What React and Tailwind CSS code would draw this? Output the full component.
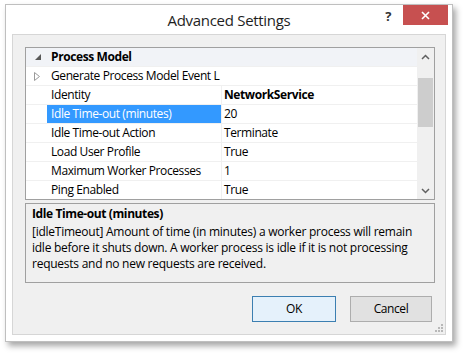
const rows = [
  { label: "Identity", value: "NetworkService", bold: true },
  { label: "Idle Time-out (minutes)", value: "20", selected: true },
  { label: "Idle Time-out Action", value: "Terminate" },
  { label: "Load User Profile", value: "True" },
  { label: "Maximum Worker Processes", value: "1" },
  { label: "Ping Enabled", value: "True" },
];

function Row({ label, value, bold, selected }) {
  return (
    <div className="flex h-[19px] border-b border-[#f0f0f0]">
      <div className="w-[21px] shrink-0 bg-white" />
      <div
        className={
          selected
            ? "w-[174px] shrink-0 bg-[#3399ff] text-white pl-[4px] leading-[18px]"
            : "w-[174px] shrink-0 pl-[4px] leading-[18px]"
        }
      >
        {label}
      </div>
      <div
        className={
          bold
            ? "flex-1 border-l border-[#f0f0f0] pl-[2px] leading-[18px] font-bold"
            : "flex-1 border-l border-[#f0f0f0] pl-[2px] leading-[18px]"
        }
      >
        {value}
      </div>
    </div>
  );
}

export default function App() {
  return (
    <div
      className="w-[466px] h-[354px] bg-white overflow-hidden pt-[4px] pl-[5px] text-[12px] tracking-[-0.4px] text-black"
      style={{ fontFamily: "'Open Sans', 'Noto Sans', sans-serif" }}
    >
      <div className="w-[448px] h-[338px] border border-[#bfbfbf] bg-white shadow-[3px_4px_6px_rgba(0,0,0,0.35)] flex flex-col">
        {/* title bar */}
        <div className="relative h-[29px] shrink-0 flex items-center justify-center">
          <span className="text-[15px] tracking-[-0.3px] text-[#1e1e1e] mt-[1px]">Advanced Settings</span>
          <div className="absolute right-[4px] top-0 flex items-start">
            <span className="text-[13px] font-bold text-[#333] mr-[12px] mt-[2px]">?</span>
            <div className="w-[45px] h-[20px] bg-[#c75050] flex items-center justify-center">
              <svg width="9" height="9" viewBox="0 0 9 9">
                <path d="M1 1 L8 8 M8 1 L1 8" stroke="white" strokeWidth="1.6" />
              </svg>
            </div>
          </div>
        </div>

        {/* client area */}
        <div className="relative mx-[6px] h-[301px] border border-[#d6d6d6] bg-[#f0f0f0] p-[12px] flex flex-col">
          {/* property grid */}
          <div className="w-[410px] h-[153px] border border-[#a0a0a0] bg-white flex overflow-hidden">
            <div className="flex-1 overflow-hidden">
              <div className="flex items-center h-[19px] bg-[#f1f3f7] border-b border-[#f0f0f0]">
                <div className="w-[21px] flex justify-center">
                  <svg width="6" height="6" viewBox="0 0 6 6" className="ml-[2px]">
                    <polygon points="6,0 6,6 0,6" fill="#595959" />
                  </svg>
                </div>
                <span className="pl-[4px] font-bold">Process Model</span>
              </div>
              <div className="flex h-[19px] border-b border-[#f0f0f0]">
                <div className="w-[21px] shrink-0 flex items-center justify-center">
                  <svg width="6" height="9" viewBox="0 0 6 9" className="ml-[1px]">
                    <polygon points="0.5,0.5 5.5,4.5 0.5,8.5" fill="none" stroke="#9a9a9a" />
                  </svg>
                </div>
                <div className="pl-[4px] leading-[18px] whitespace-nowrap">
                  Generate Process Model Event L
                </div>
              </div>
              {rows.map((r) => (
                <Row key={r.label} {...r} />
              ))}
            </div>
            {/* scrollbar */}
            <div className="w-[17px] shrink-0 bg-[#f0f0f0] flex flex-col items-center">
              <div className="h-[17px] flex items-center justify-center">
                <svg width="9" height="6" viewBox="0 0 9 6">
                  <path d="M1 5 L4.5 1.5 L8 5" fill="none" stroke="#606060" strokeWidth="1.5" />
                </svg>
              </div>
              <div className="mt-[13px] w-[15px] h-[49px] bg-[#cdcdcd]" />
              <div className="flex-1" />
              <div className="h-[17px] flex items-center justify-center">
                <svg width="9" height="6" viewBox="0 0 9 6">
                  <path d="M1 1 L4.5 4.5 L8 1" fill="none" stroke="#606060" strokeWidth="1.5" />
                </svg>
              </div>
            </div>
          </div>

          {/* description */}
          <div className="mt-[3px] w-[410px] h-[80px] border border-[#a0a0a0] bg-[#f0f0f0] px-[6px] pt-[2px] leading-[16px] tracking-[-0.25px] whitespace-nowrap">
            <div className="font-bold tracking-[-0.4px]">Idle Time-out (minutes)</div>
            <div className="mt-[2px]">
              [idleTimeout] Amount of time (in minutes) a worker process will remain
              <br />
              idle before it shuts down. A worker process is idle if it is not processing
              <br />
              requests and no new requests are received.
            </div>
          </div>

          {/* buttons */}
          <div className="mt-[13px] flex justify-end gap-[14px] pr-[1px]">
            <button className="w-[84px] h-[26px] border border-[#3c7fb1] bg-[#e5f1fb] text-[12px]">
              OK
            </button>
            <button className="w-[82px] h-[26px] border border-[#adadad] bg-[#e1e1e1] text-[12px]">
              Cancel
            </button>
          </div>

          {/* resize grip */}
          <svg width="8" height="8" viewBox="0 0 8 8" className="absolute right-[2px] bottom-[2px]">
            <rect x="6" y="0" width="2" height="2" fill="#b8b8b8" />
            <rect x="3" y="3" width="2" height="2" fill="#b8b8b8" />
            <rect x="6" y="3" width="2" height="2" fill="#b8b8b8" />
            <rect x="0" y="6" width="2" height="2" fill="#b8b8b8" />
            <rect x="3" y="6" width="2" height="2" fill="#b8b8b8" />
            <rect x="6" y="6" width="2" height="2" fill="#b8b8b8" />
          </svg>
        </div>
      </div>
    </div>
  );
}
